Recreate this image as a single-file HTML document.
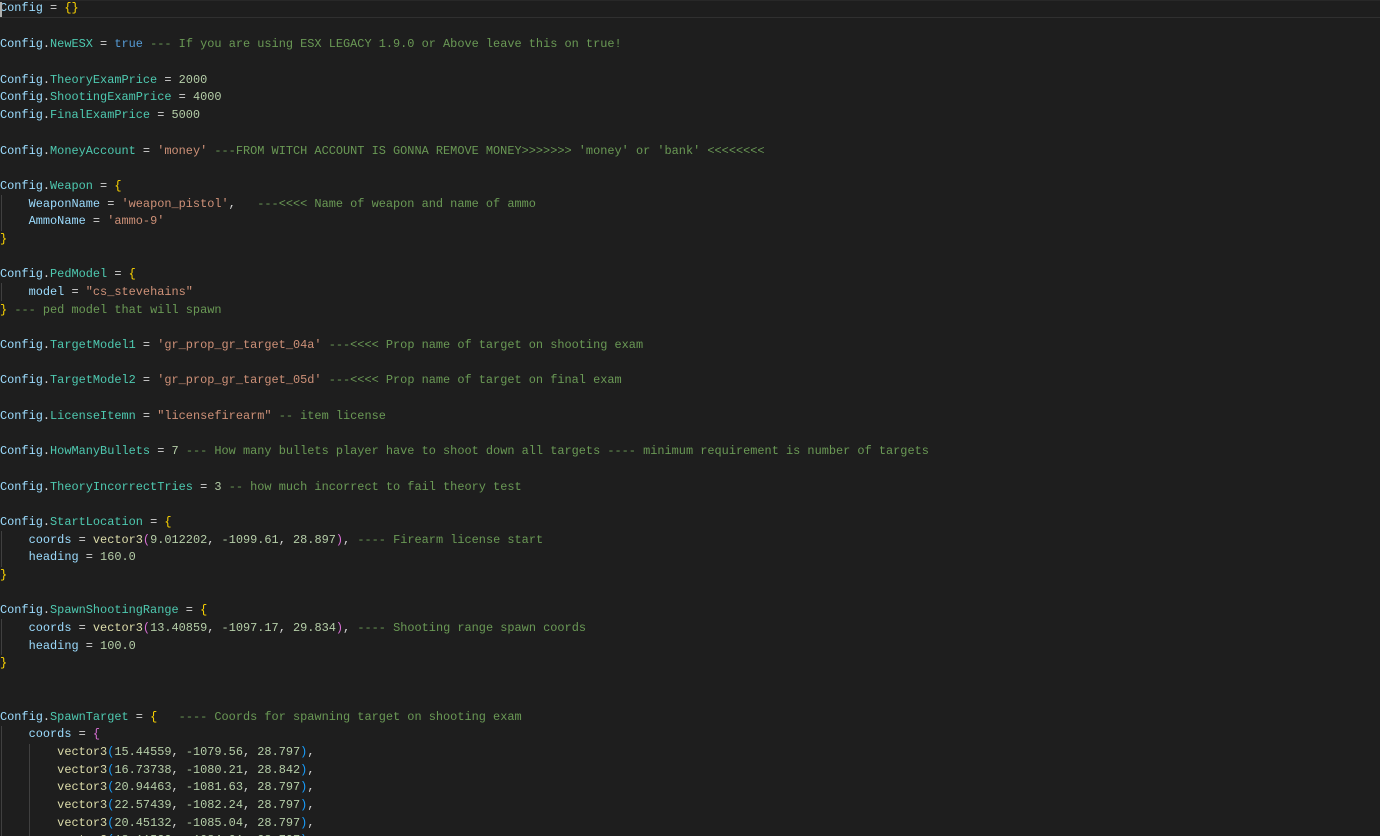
<!DOCTYPE html>
<html><head><meta charset="utf-8"><style>
html,body{margin:0;padding:0;background:#1e1e1e;width:1380px;height:836px;overflow:hidden}
pre{margin:0;padding:1px 0 0 0;font-family:"Liberation Mono",monospace;font-size:11.92px;line-height:17.7px;color:#d4d4d4;position:relative}
.l{height:17.7px;white-space:pre;position:relative}
.hl{border-top:1px solid #282828;border-bottom:1px solid #303030;height:15.7px;line-height:15.7px;margin-top:-1px}
.c{color:#9cdcfe}.f{color:#4ec9b0}.k{color:#569cd6}.m{color:#6a9955}.n{color:#b5cea8}.s{color:#ce9178}.y{color:#ffd700}.p{color:#da70d6}.b{color:#179fff}.fn{color:#dcdcaa}
.g{position:absolute;width:1px;background:#404040}
.cur{position:absolute;left:0;top:1px;width:2px;height:15px;background:#aeafad}
</style></head><body>
<pre><div class="l hl"><span class="cur"></span><span class="c">Config</span> = <span class="y">{}</span></div><div class="l" style="height:18.7px"></div><div class="l"><span class="c">Config</span>.<span class="f">NewESX</span> = <span class="k">true</span> <span class="m">--- If you are using ESX LEGACY 1.9.0 or Above leave this on true!</span></div><div class="l"></div><div class="l"><span class="c">Config</span>.<span class="f">TheoryExamPrice</span> = <span class="n">2000</span></div><div class="l"><span class="c">Config</span>.<span class="f">ShootingExamPrice</span> = <span class="n">4000</span></div><div class="l"><span class="c">Config</span>.<span class="f">FinalExamPrice</span> = <span class="n">5000</span></div><div class="l"></div><div class="l"><span class="c">Config</span>.<span class="f">MoneyAccount</span> = <span class="s">'money'</span> <span class="m">---FROM WITCH ACCOUNT IS GONNA REMOVE MONEY&gt;&gt;&gt;&gt;&gt;&gt;&gt; 'money' or 'bank' &lt;&lt;&lt;&lt;&lt;&lt;&lt;&lt;</span></div><div class="l"></div><div class="l"><span class="c">Config</span>.<span class="f">Weapon</span> = <span class="y">{</span></div><div class="l">    <span class="c">WeaponName</span> = <span class="s">'weapon_pistol'</span>,   <span class="m">---&lt;&lt;&lt;&lt; Name of weapon and name of ammo</span></div><div class="l">    <span class="c">AmmoName</span> = <span class="s">'ammo-9'</span></div><div class="l"><span class="y">}</span></div><div class="l"></div><div class="l"><span class="c">Config</span>.<span class="f">PedModel</span> = <span class="y">{</span></div><div class="l">    <span class="c">model</span> = <span class="s">"cs_stevehains"</span></div><div class="l"><span class="y">}</span> <span class="m">--- ped model that will spawn</span></div><div class="l"></div><div class="l"><span class="c">Config</span>.<span class="f">TargetModel1</span> = <span class="s">'gr_prop_gr_target_04a'</span> <span class="m">---&lt;&lt;&lt;&lt; Prop name of target on shooting exam</span></div><div class="l"></div><div class="l"><span class="c">Config</span>.<span class="f">TargetModel2</span> = <span class="s">'gr_prop_gr_target_05d'</span> <span class="m">---&lt;&lt;&lt;&lt; Prop name of target on final exam</span></div><div class="l"></div><div class="l"><span class="c">Config</span>.<span class="f">LicenseItemn</span> = <span class="s">"licensefirearm"</span> <span class="m">-- item license</span></div><div class="l"></div><div class="l"><span class="c">Config</span>.<span class="f">HowManyBullets</span> = <span class="n">7</span> <span class="m">--- How many bullets player have to shoot down all targets ---- minimum requirement is number of targets</span></div><div class="l"></div><div class="l"><span class="c">Config</span>.<span class="f">TheoryIncorrectTries</span> = <span class="n">3</span> <span class="m">-- how much incorrect to fail theory test</span></div><div class="l"></div><div class="l"><span class="c">Config</span>.<span class="f">StartLocation</span> = <span class="y">{</span></div><div class="l">    <span class="c">coords</span> = <span class="fn">vector3</span><span class="p">(</span><span class="n">9.012202</span>, <span class="n">-1099.61</span>, <span class="n">28.897</span><span class="p">)</span>, <span class="m">---- Firearm license start</span></div><div class="l">    <span class="c">heading</span> = <span class="n">160.0</span></div><div class="l"><span class="y">}</span></div><div class="l"></div><div class="l"><span class="c">Config</span>.<span class="f">SpawnShootingRange</span> = <span class="y">{</span></div><div class="l">    <span class="c">coords</span> = <span class="fn">vector3</span><span class="p">(</span><span class="n">13.40859</span>, <span class="n">-1097.17</span>, <span class="n">29.834</span><span class="p">)</span>, <span class="m">---- Shooting range spawn coords</span></div><div class="l">    <span class="c">heading</span> = <span class="n">100.0</span></div><div class="l"><span class="y">}</span></div><div class="l"></div><div class="l"></div><div class="l"><span class="c">Config</span>.<span class="f">SpawnTarget</span> = <span class="y">{</span>   <span class="m">---- Coords for spawning target on shooting exam</span></div><div class="l">    <span class="c">coords</span> = <span class="p">{</span></div><div class="l">        <span class="fn">vector3</span><span class="b">(</span><span class="n">15.44559</span>, <span class="n">-1079.56</span>, <span class="n">28.797</span><span class="b">)</span>,</div><div class="l">        <span class="fn">vector3</span><span class="b">(</span><span class="n">16.73738</span>, <span class="n">-1080.21</span>, <span class="n">28.842</span><span class="b">)</span>,</div><div class="l">        <span class="fn">vector3</span><span class="b">(</span><span class="n">20.94463</span>, <span class="n">-1081.63</span>, <span class="n">28.797</span><span class="b">)</span>,</div><div class="l">        <span class="fn">vector3</span><span class="b">(</span><span class="n">22.57439</span>, <span class="n">-1082.24</span>, <span class="n">28.797</span><span class="b">)</span>,</div><div class="l">        <span class="fn">vector3</span><span class="b">(</span><span class="n">20.45132</span>, <span class="n">-1085.04</span>, <span class="n">28.797</span><span class="b">)</span>,</div><div class="l">        <span class="fn">vector3</span><span class="b">(</span><span class="n">18.11532</span>, <span class="n">-1084.01</span>, <span class="n">28.797</span><span class="b">)</span>,</div></pre>
<div class="g" style="left:1px;top:195px;height:36px"></div>
<div class="g" style="left:1px;top:283px;height:18px"></div>
<div class="g" style="left:1px;top:531px;height:36px"></div>
<div class="g" style="left:1px;top:619px;height:36px"></div>
<div class="g" style="left:1px;top:726px;height:110px"></div>
<div class="g" style="left:29px;top:744px;height:92px"></div>
</body></html>
